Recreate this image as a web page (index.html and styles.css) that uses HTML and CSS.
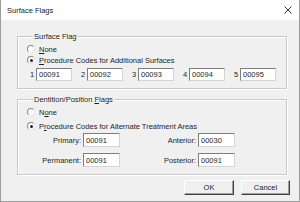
FILE: index.html
```html
<!DOCTYPE html>
<html lang="en">
<head>
    <meta charset="UTF-8">
    <title>Surface Flags</title>
    <link rel="stylesheet" href="styles.css">
</head>
<body>

<div class="window">
    <!-- Title bar -->
    <div class="title-bar">
        <span class="title">Surface Flags</span>
        <svg class="close" width="8" height="8" viewBox="0 0 8 8">
            <path d="M0.5 0.5 L7.5 7.5 M7.5 0.5 L0.5 7.5" stroke="#333" stroke-width="1" fill="none"/>
        </svg>
    </div>

    <div class="dialog-body">
        <!-- Surface Flag group -->
        <fieldset class="group group-surface">
            <legend>Surface Flag</legend>
            <label class="radio-row">
                <input type="radio" name="surface"><span><u>N</u>one</span>
            </label>
            <label class="radio-row">
                <input type="radio" name="surface" checked><span><u>P</u>rocedure Codes for Additional Surfaces</span>
            </label>
            <div class="codes-row">
                <div class="code"><span class="num">1</span><input type="text" class="field" value="00091"></div>
                <div class="code"><span class="num">2</span><input type="text" class="field" value="00092"></div>
                <div class="code"><span class="num">3</span><input type="text" class="field" value="00093"></div>
                <div class="code"><span class="num">4</span><input type="text" class="field" value="00094"></div>
                <div class="code"><span class="num">5</span><input type="text" class="field" value="00095"></div>
            </div>
        </fieldset>

        <!-- Dentition/Position Flags group -->
        <fieldset class="group group-dentition">
            <legend>Dentition/Position <u>F</u>lags</legend>
            <label class="radio-row">
                <input type="radio" name="dentition"><span>N<u>o</u>ne</span>
            </label>
            <label class="radio-row">
                <input type="radio" name="dentition" checked><span>P<u>r</u>ocedure Codes for Alternate Treatment Areas</span>
            </label>
            <div class="areas-grid">
                <span class="area-label">Primary:</span>
                <input type="text" class="field" value="00091">
                <span class="area-label">Anterior:</span>
                <input type="text" class="field" value="00030">
                <span class="area-label">Permanent:</span>
                <input type="text" class="field" value="00091">
                <span class="area-label">Posterior:</span>
                <input type="text" class="field" value="00091">
            </div>
        </fieldset>

        <!-- Buttons -->
        <div class="button-row">
            <button class="btn btn-ok">OK</button>
            <button class="btn btn-cancel">Cancel</button>
        </div>
    </div>
</div>

</body>
</html>
```

FILE: styles.css
```css
body {
    margin: 0;
    padding: 0;
    background-color: #f0f0f0;
    font-family: 'Liberation Sans', Arial, sans-serif;
    font-size: 7.5px;
    color: #1e1e1e;
}
.window {
    width: 300px;
    height: 202px;
    box-sizing: border-box;
    border: 1px solid #9c9c9c;
    border-top: none;
    background-color: #f0f0f0;
    display: flex;
    flex-direction: column;
}
.title-bar {
    height: 20px;
    background-color: #fff;
    display: flex;
    align-items: center;
    justify-content: space-between;
    padding: 0 7px 0 6px;
    flex-shrink: 0;
}
.title {
    font-size: 7.5px;
    color: #222;
}
.close {
    display: block;
}
.dialog-body {
    flex: 1;
    padding: 12px 9px 0 16px;
    display: flex;
    flex-direction: column;
}
/* Group boxes */
.group {
    margin: 0;
    padding: 0 0 0 9px;
    border: 1px solid #c9c9c9;
    box-shadow: 1px 1px 0 #fff, inset 1px 1px 0 #fff;
    width: 270px;
    box-sizing: border-box;
}
.group legend {
    margin-left: 6px;
    padding: 0 1px;
    line-height: 9px;
}
.group-surface {
    padding-top: 3px;
    padding-bottom: 7px;
}
.group-dentition {
    margin-top: 6px;
    padding-top: 3px;
    padding-bottom: 7px;
}
.radio-row {
    display: flex;
    align-items: center;
    height: 10px;
    margin-bottom: 1px;
}
.group-dentition .radio-row {
    margin-bottom: 4px;
}
.radio-row input {
    appearance: none;
    -webkit-appearance: none;
    width: 8px;
    height: 8px;
    margin: 0 4px 0 0;
    border-radius: 50%;
    border: 1px solid;
    border-color: #8a8a8a #e6e6e6 #e6e6e6 #8a8a8a;
    background-color: #fff;
    position: relative;
}
.radio-row input:checked::after {
    content: '';
    position: absolute;
    left: 2px;
    top: 2px;
    width: 3px;
    height: 3px;
    border-radius: 50%;
    background-color: #222;
}
/* Text fields */
.field {
    box-sizing: border-box;
    width: 36px;
    height: 13px;
    margin: 0;
    padding: 0 0 0 2px;
    border: 1px solid;
    border-color: #7e7e7e #d4d4d4 #d4d4d4 #7e7e7e;
    background-color: #fff;
    font-family: 'Liberation Sans', Arial, sans-serif;
    font-size: 7.5px;
    color: #1e1e1e;
    outline: none;
}
.codes-row {
    display: flex;
    gap: 9px;
    margin: 3px 0 0 3px;
}
.code {
    display: flex;
    align-items: center;
}
.num {
    width: 4px;
    margin-right: 2px;
}
.areas-grid {
    display: grid;
    grid-template-columns: 54px 37px 74px 37px;
    column-gap: 2px;
    row-gap: 6px;
    align-items: center;
    margin-top: -2px;
}
.areas-grid .field {
    width: 37px;
    height: 14px;
}
.area-label {
    text-align: right;
}
/* Buttons */
.button-row {
    display: flex;
    justify-content: flex-end;
    gap: 7px;
    margin-top: 5px;
}
.btn {
    height: 15px;
    padding: 0;
    border: 1px solid;
    border-color: #fff #404040 #404040 #fff;
    box-shadow: inset -1px -1px 0 #a0a0a0;
    background-color: #f0f0f0;
    font-family: 'Liberation Sans', Arial, sans-serif;
    font-size: 7.5px;
    color: #1e1e1e;
}
.btn-ok {
    width: 50px;
}
.btn-cancel {
    width: 49px;
}
```
